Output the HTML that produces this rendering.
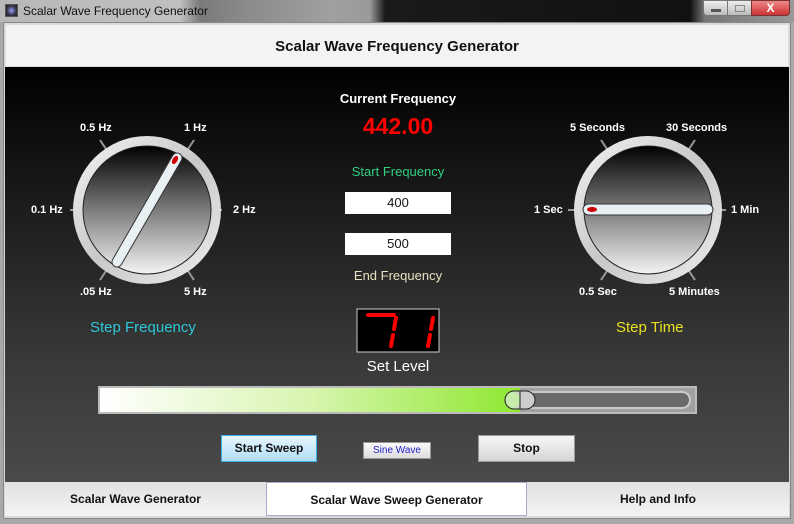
<!DOCTYPE html>
<html><head><meta charset="utf-8"><style>
*{margin:0;padding:0;box-sizing:border-box}
body{width:794px;height:524px;overflow:hidden;position:relative;font-family:"Liberation Sans",sans-serif;background:#9a9a9a}
.abs{position:absolute}
.tb{left:0;top:0;width:794px;height:24px;background:linear-gradient(90deg,#b8b8b8 0,#c0c0c0 180px,#7a7a7a 200px,#8c8c8c 250px,#a0a0a0 330px,#9a9a9a 370px,#1a1a1a 385px,#111 690px,#777 705px,#999 794px)}
.hdr{left:5px;top:24px;width:784px;height:43px;background:#f3f3f3;border:1px solid #ddd;font-weight:bold;font-size:15px;text-align:center;line-height:43px;color:#111}
.main{left:5px;top:67px;width:784px;height:415px;background:linear-gradient(#000 0,#1c1c1c 140px,#3a3a3a 300px,#4a4a4a 415px)}
.lbl{color:#fff;font-weight:bold;font-size:11px;white-space:nowrap}
.btn{font-weight:bold;font-size:12px;text-align:center;color:#111}
.tab{top:482px;height:34px;font-weight:bold;font-size:12px;text-align:center;line-height:34px;color:#111;background:linear-gradient(#e0e0e0,#f4f4f4)}
</style></head><body>
<div class="abs tb"></div>
<div class="abs" style="left:5px;top:4px;width:13px;height:13px;background:radial-gradient(#99f,#334 60%,#222);border:1px solid #555"></div>
<div class="abs" style="left:23px;top:4px;font-size:12px;color:#111">Scalar Wave Frequency Generator</div>
<div class="abs" style="left:703px;top:0;width:25px;height:16px;background:linear-gradient(#eee,#bbb);border:1px solid #777;border-radius:0 0 0 4px"><div style="margin:8px 7px 0;height:3px;background:#555;width:10px"></div></div>
<div class="abs" style="left:727px;top:0;width:25px;height:16px;background:linear-gradient(#eee,#bbb);border:1px solid #777"><div style="margin:4px 7px 0;height:7px;border:1px solid #888;width:10px"></div></div>
<div class="abs" style="left:751px;top:0;width:39px;height:16px;background:linear-gradient(#e88,#c33);border:1px solid #733;border-radius:0 0 4px 0;color:#fff;font-weight:bold;font-size:12px;text-align:center;line-height:15px">X</div>
<div class="abs" style="left:0;top:22px;width:794px;height:502px;background:#a8a8a8"></div>
<div class="abs" style="left:3px;top:22px;width:788px;height:497px;background:#d8d8d8;border:1px solid #888"></div>
<div class="abs hdr">Scalar Wave Frequency Generator</div>
<div class="abs main"></div>

<svg class="abs" style="left:0;top:0" width="794" height="524">
<defs>
<linearGradient id="face" x1="0" y1="0" x2="0" y2="1"><stop offset="0" stop-color="#000"/><stop offset="0.55" stop-color="#888"/><stop offset="1" stop-color="#f4f4f4"/></linearGradient>
<linearGradient id="rim" x1="0" y1="0" x2="1" y2="1"><stop offset="0" stop-color="#f4f4f4"/><stop offset="0.5" stop-color="#c8c8c8"/><stop offset="1" stop-color="#eee"/></linearGradient>
<linearGradient id="grn" x1="0" y1="0" x2="1" y2="0"><stop offset="0" stop-color="#fff"/><stop offset="0.5" stop-color="#d8f5b0"/><stop offset="1" stop-color="#8ee830"/></linearGradient>
</defs>
<g stroke="#999" stroke-width="2">
<line x1="87" y1="210" x2="70" y2="210"/><line x1="207" y1="210" x2="222" y2="210"/>
<line x1="108" y1="152" x2="100" y2="140"/><line x1="186" y1="152" x2="194" y2="140"/>
<line x1="108" y1="268" x2="100" y2="280"/><line x1="186" y1="268" x2="194" y2="280"/>
<line x1="588" y1="210" x2="568" y2="210"/><line x1="708" y1="210" x2="726" y2="210"/>
<line x1="609" y1="152" x2="601" y2="140"/><line x1="687" y1="152" x2="695" y2="140"/>
<line x1="609" y1="268" x2="601" y2="280"/><line x1="687" y1="268" x2="695" y2="280"/>
</g>
<circle cx="147" cy="210" r="74" fill="url(#rim)"/>
<circle cx="147" cy="210" r="64" fill="url(#face)" stroke="#222" stroke-width="1"/>
<line x1="117" y1="262" x2="177" y2="158" stroke="#333" stroke-width="11" stroke-linecap="round"/>
<line x1="117" y1="262" x2="177" y2="158" stroke="#e8f0f4" stroke-width="9" stroke-linecap="round"/>
<ellipse cx="175" cy="160" rx="2.5" ry="4.5" transform="rotate(30 175 160)" fill="#c00"/>
<circle cx="648" cy="210" r="74" fill="url(#rim)"/>
<circle cx="648" cy="210" r="64" fill="url(#face)" stroke="#222" stroke-width="1"/>
<rect x="583" y="204" width="130" height="11" rx="5.5" fill="#e8f0f4" stroke="#333"/>
<ellipse cx="592" cy="209.5" rx="5" ry="2.5" fill="#c00"/>
<!-- slider -->
<rect x="98" y="386" width="599" height="28" fill="#bbb"/>
<rect x="100" y="388" width="420" height="24" fill="url(#grn)"/>
<rect x="520" y="388" width="175" height="24" fill="#a0a0a0"/>
<rect x="512" y="392" width="178" height="16" rx="8" fill="#6a6a6a" stroke="#ccc" stroke-width="2"/>
<rect x="100" y="394" width="420" height="12" fill="url(#grn)"/>
<rect x="505" y="391" width="30" height="18" rx="9" fill="#ccc" stroke="#222"/>
<rect x="506" y="392" width="14" height="16" rx="7" fill="#c8ecaa"/>
<line x1="520" y1="391" x2="520" y2="409" stroke="#222"/>
<!-- display -->
<rect x="357" y="309" width="82" height="43" fill="#000" stroke="#ccc"/>
<g stroke="#f00" stroke-width="4" stroke-linecap="round" fill="none">
<line x1="368" y1="315" x2="394" y2="315"/><line x1="396" y1="318" x2="394" y2="329"/><line x1="393" y1="335" x2="391" y2="346"/>
<line x1="433" y1="318" x2="431" y2="329"/><line x1="430" y1="335" x2="428" y2="346"/>
</g>
</svg>

<div class="abs lbl" style="left:80px;top:122px">0.5 Hz</div>
<div class="abs lbl" style="left:184px;top:122px">1 Hz</div>
<div class="abs lbl" style="left:31px;top:204px">0.1 Hz</div>
<div class="abs lbl" style="left:233px;top:204px">2 Hz</div>
<div class="abs lbl" style="left:80px;top:286px">.05 Hz</div>
<div class="abs lbl" style="left:184px;top:286px">5 Hz</div>
<div class="abs lbl" style="left:570px;top:122px">5 Seconds</div>
<div class="abs lbl" style="left:666px;top:122px">30 Seconds</div>
<div class="abs lbl" style="left:534px;top:204px">1 Sec</div>
<div class="abs lbl" style="left:731px;top:204px">1 Min</div>
<div class="abs lbl" style="left:579px;top:286px">0.5 Sec</div>
<div class="abs lbl" style="left:669px;top:286px">5 Minutes</div>
<div class="abs" style="left:90px;top:319px;color:#2cc8d8;font-size:15px">Step Frequency</div>
<div class="abs" style="left:616px;top:319px;color:#e8e020;font-size:15px">Step Time</div>

<div class="abs" style="left:298px;top:91px;width:200px;text-align:center;color:#fff;font-weight:bold;font-size:13px">Current Frequency</div>
<div class="abs" style="left:298px;top:113px;width:200px;text-align:center;color:#f00;font-weight:bold;font-size:23px">442.00</div>
<div class="abs" style="left:298px;top:164px;width:200px;text-align:center;color:#2ed080;font-size:13px">Start Frequency</div>
<div class="abs" style="left:345px;top:192px;width:106px;height:22px;background:#fff;text-align:center;line-height:22px;font-size:13px;color:#111">400</div>
<div class="abs" style="left:345px;top:233px;width:106px;height:22px;background:#fff;text-align:center;line-height:22px;font-size:13px;color:#111">500</div>
<div class="abs" style="left:298px;top:268px;width:200px;text-align:center;color:#e8e0c0;font-size:13px">End Frequency</div>
<div class="abs" style="left:298px;top:358px;width:200px;text-align:center;color:#fff;font-size:15px">Set Level</div>

<div class="abs btn" style="left:221px;top:435px;width:96px;height:27px;line-height:25px;background:linear-gradient(#e8f6fe,#b0dcf4);border:1px solid #3ab0e8">Start Sweep</div>
<div class="abs" style="left:363px;top:442px;width:68px;height:17px;line-height:16px;text-align:center;font-size:10px;color:#22c;background:linear-gradient(#fafafa,#ddd);border:1px solid #999">Sine Wave</div>
<div class="abs btn" style="left:478px;top:435px;width:97px;height:27px;line-height:25px;background:linear-gradient(#f6f6f6,#d6d6d6);border:1px solid #999">Stop</div>

<div class="abs tab" style="left:5px;width:261px">Scalar Wave Generator</div>
<div class="abs tab" style="left:266px;width:261px;background:#fff;border:1px solid #aac">Scalar Wave Sweep Generator</div>
<div class="abs tab" style="left:527px;width:262px">Help and Info</div>
</body></html>
